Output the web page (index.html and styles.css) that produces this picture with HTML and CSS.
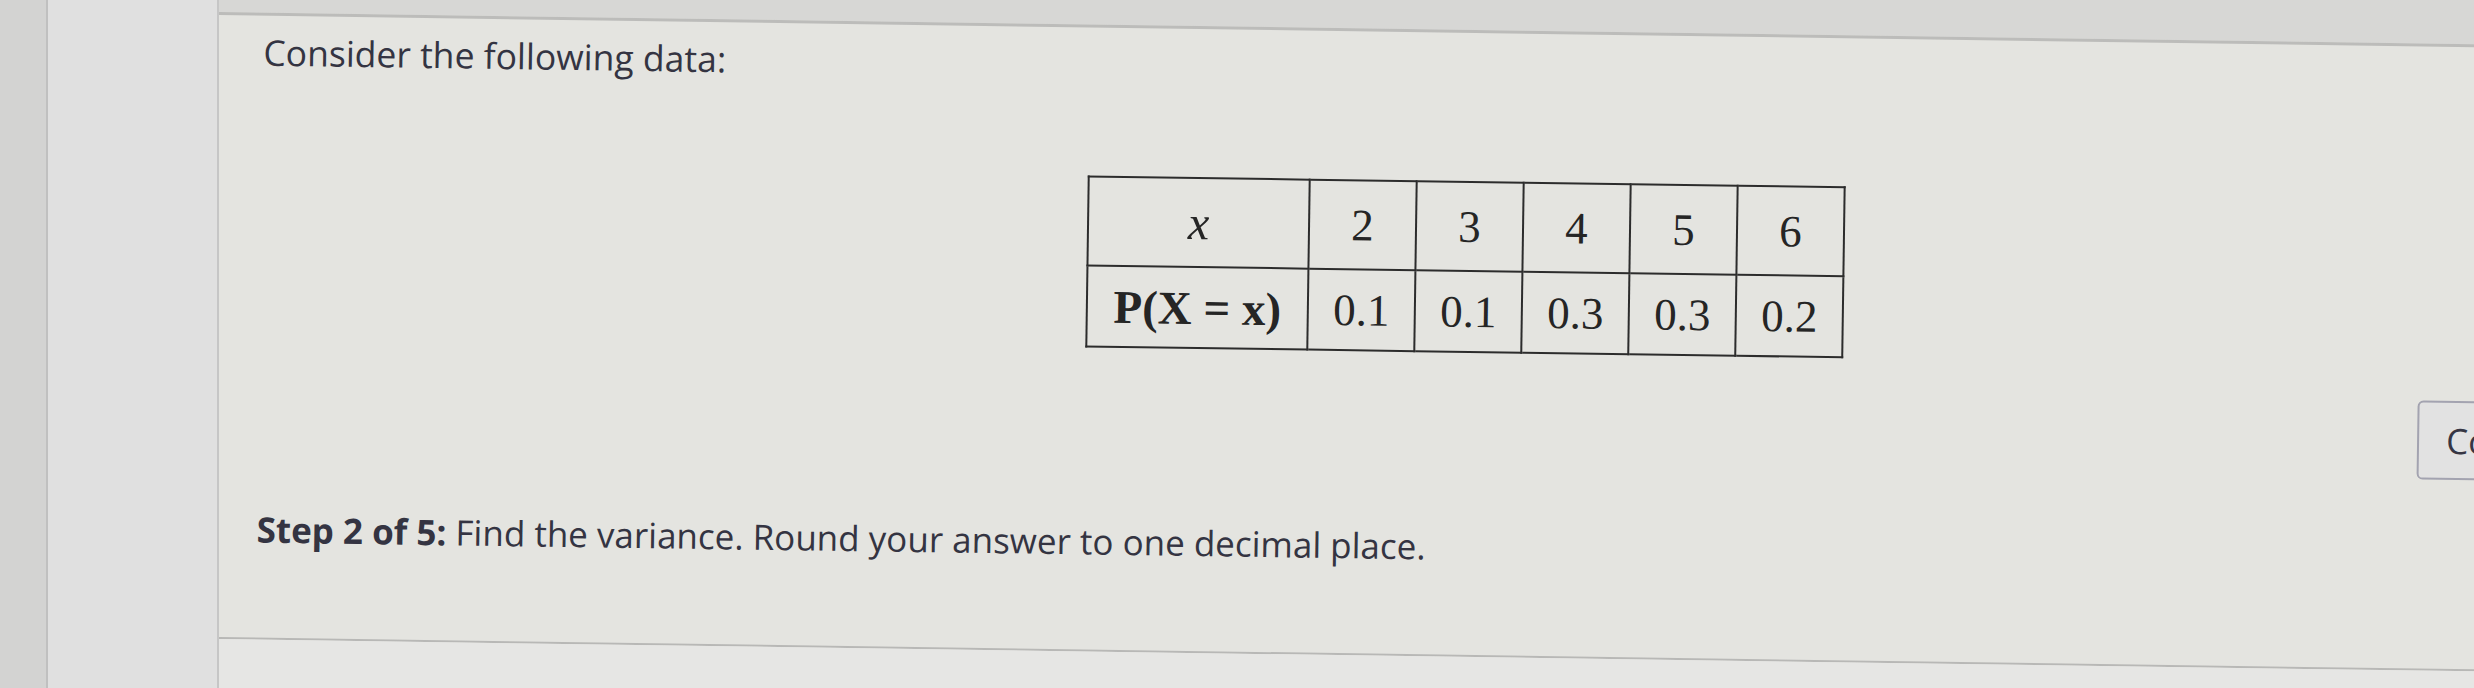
FILE: index.html
```html
<!DOCTYPE html>
<html>
<head>
<meta charset="utf-8">
<link rel="stylesheet" href="styles.css">
</head>
<body>
<div class="page">
  <div class="rail rail-outer"></div>
  <div class="rail rail-inner"></div>
  <div class="main">
    <div class="sheet">
      <div class="q-area">
        <div class="content">
          <p class="heading">Consider the following data:</p>
          <table class="data">
            <tr class="row-top">
              <td class="label"><i>x</i></td>
              <td>2</td><td>3</td><td>4</td><td>5</td><td>6</td>
            </tr>
            <tr class="row-bottom">
              <td class="label"><b>P(X = x)</b></td>
              <td>0.1</td><td>0.1</td><td>0.3</td><td>0.3</td><td>0.2</td>
            </tr>
          </table>
          <p class="step"><b>Step 2 of 5:</b> Find the variance. Round your answer to one decimal place.</p>
        </div>
        <div class="side">
          <button class="btn">Continue</button>
        </div>
      </div>
      <div class="lower"></div>
    </div>
  </div>
</div>
</body>
</html>
```

FILE: styles.css
```css
html, body {
  margin: 0;
  padding: 0;
  width: 2474px;
  height: 688px;
  overflow: hidden;
  background: #d6d6d4;
}

.page {
  display: flex;
  width: 2474px;
  height: 688px;
}

.rail {
  flex: none;
  height: 100%;
}

.rail-outer {
  width: 46px;
  background: #d3d3d2;
  border-right: 2px solid #c0c0c0;
}

.rail-inner {
  width: 169px;
  background: #e0e0e0;
  border-right: 2px solid #c6c6c6;
}

.main {
  flex: 1;
  position: relative;
  overflow: hidden;
  background: #d7d7d5;
  padding-top: 12px;
}

.sheet {
  width: 2400px;
  height: 820px;
  background: #e4e4e0;
  border-top: 3px solid #bcbcba;
  transform: rotate(0.82deg);
  transform-origin: 0 0;
  display: flex;
  flex-direction: column;
}

.q-area {
  flex: none;
  height: 610px;
  padding-top: 12px;
  border-bottom: 2px solid #b8b8b6;
  display: flex;
}

.content {
  flex: 0 0 2159px;
  padding-left: 45px;
  display: flex;
  flex-direction: column;
  align-items: flex-start;
  font-family: "Open Sans", "Liberation Sans", sans-serif;
  color: #343442;
}

.heading {
  margin: 0;
  font-size: 35.5px;
  line-height: 48px;
}

.data {
  margin-top: 88px;
  margin-left: 826px;
  border-collapse: collapse;
  font-family: "Liberation Serif", "Times New Roman", serif;
  font-size: 45px;
  color: #252525;
}

.data td {
  border: 2px solid #2c2c2c;
  width: 105px;
  padding: 0;
  text-align: center;
}

.row-top td {
  height: 87px;
}

.row-bottom td {
  height: 79px;
}

.data td.label {
  width: 219px;
}

.data i {
  font-size: 48px;
}

.data b {
  font-size: 47px;
}

.step {
  margin: 170px 0 0 0;
  font-size: 35px;
  line-height: 48px;
}

.step b {
  font-weight: 700;
}

.side {
  flex: none;
  padding-top: 342px;
}

.btn {
  height: 79px;
  padding: 0 27px;
  border: 2px solid #a3a3b0;
  border-radius: 6px;
  background: #e2e2e2;
  font-family: "Open Sans", "Liberation Sans", sans-serif;
  font-size: 35px;
  color: #363644;
}

.lower {
  flex: 1;
  background: #e6e6e4;
}
```
